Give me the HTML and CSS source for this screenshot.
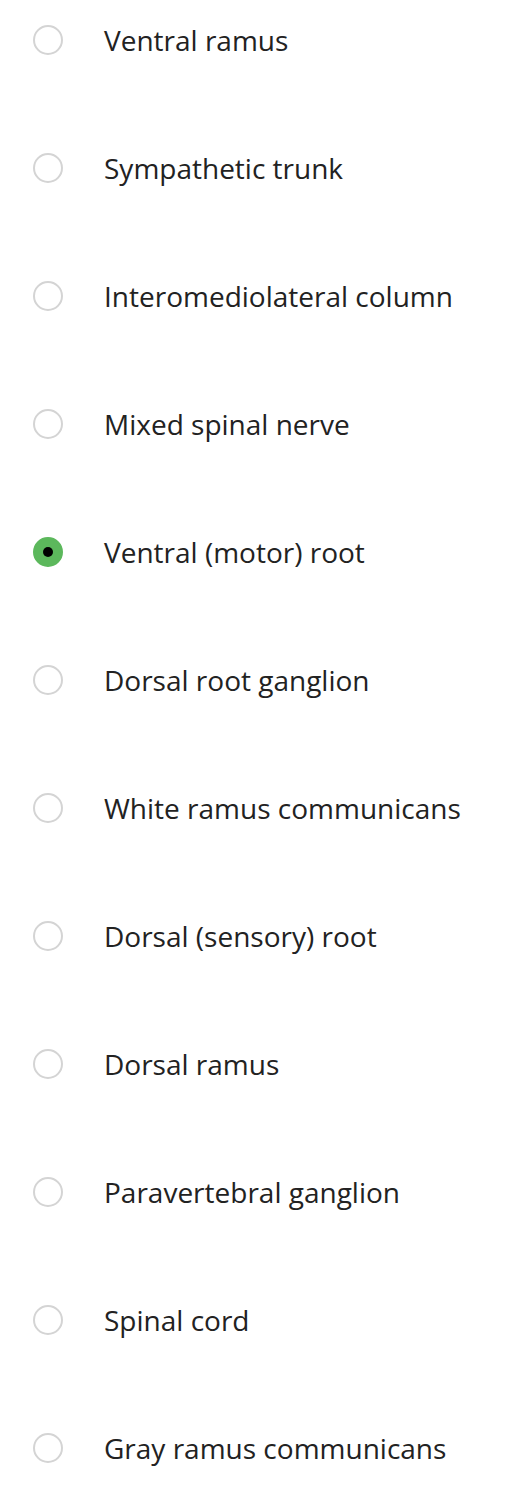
FILE: index.html
```html
<!DOCTYPE html>
<html>
<head>
<meta charset="utf-8">
<link rel="stylesheet" href="styles.css">
</head>
<body>
<ul class="options">
  <li class="option"><span class="radio"></span><span class="label">Ventral ramus</span></li>
  <li class="option"><span class="radio"></span><span class="label">Sympathetic trunk</span></li>
  <li class="option"><span class="radio"></span><span class="label">Interomediolateral column</span></li>
  <li class="option"><span class="radio"></span><span class="label">Mixed spinal nerve</span></li>
  <li class="option"><span class="radio checked"></span><span class="label">Ventral (motor) root</span></li>
  <li class="option"><span class="radio"></span><span class="label">Dorsal root ganglion</span></li>
  <li class="option"><span class="radio"></span><span class="label">White ramus communicans</span></li>
  <li class="option"><span class="radio"></span><span class="label">Dorsal (sensory) root</span></li>
  <li class="option"><span class="radio"></span><span class="label">Dorsal ramus</span></li>
  <li class="option"><span class="radio"></span><span class="label">Paravertebral ganglion</span></li>
  <li class="option"><span class="radio"></span><span class="label">Spinal cord</span></li>
  <li class="option"><span class="radio"></span><span class="label">Gray ramus communicans</span></li>
</ul>
</body>
</html>
```
FILE: styles.css
```css
html, body {
  margin: 0;
  padding: 0;
  background: #ffffff;
}
body {
  font-family: "Open Sans", "Noto Sans", sans-serif;
  color: #222222;
}
.options {
  list-style: none;
  margin: 0;
  padding: 0 0 0 33px;
  display: flex;
  flex-direction: column;
  gap: 48px;
}
.option {
  height: 80px;
  display: flex;
  align-items: center;
}
.radio {
  box-sizing: border-box;
  width: 30px;
  height: 30px;
  border-radius: 50%;
  border: 2px solid #d4d4d4;
  background: #ffffff;
  flex: none;
  display: flex;
  align-items: center;
  justify-content: center;
}
.radio.checked {
  border-color: #5cb85c;
  background: #5cb85c;
}
.radio.checked::after {
  content: "";
  width: 10px;
  height: 10px;
  border-radius: 50%;
  background: #000000;
}
.label {
  margin-left: 41px;
  font-size: 28px;
  line-height: 38px;
}
```
